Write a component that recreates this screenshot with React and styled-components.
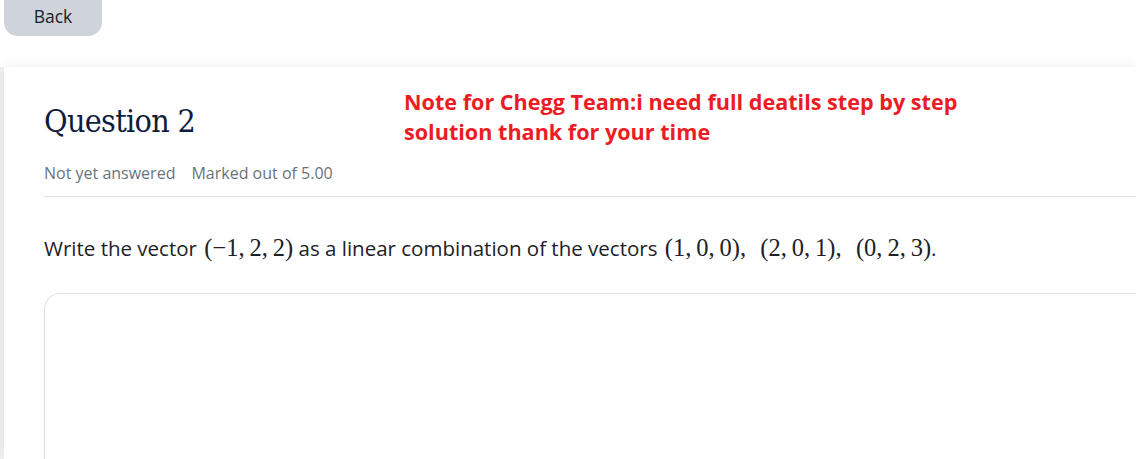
import React from "react";
import styled, { createGlobalStyle } from "styled-components";

const GlobalStyle = createGlobalStyle`
  html, body {
    margin: 0;
    padding: 0;
    background: #ffffff;
    overflow: hidden;
  }
  body {
    font-family: "Open Sans", "Noto Sans", sans-serif;
    color: #1d2125;
  }
`;

const Page = styled.div`
  display: flex;
  flex-direction: column;
  width: 1136px;
  height: 459px;
  overflow: hidden;
`;

const BackButton = styled.button`
  align-self: flex-start;
  margin: -12px 0 0 4px;
  width: 98px;
  height: 48px;
  padding: 8px 0 0;
  border: none;
  border-radius: 14px;
  background: #ced4da;
  color: #1d2125;
  font-family: "Open Sans", sans-serif;
  font-size: 17.5px;
`;

const Card = styled.section`
  display: flex;
  flex-direction: column;
  margin: 31px 0 0 4px;
  padding: 20px 0 0 40px;
  background: #fff;
  box-shadow: 0 -2px 12px rgba(0, 0, 0, 0.06), -4px 0 0 #f0f0f0;
  flex: 1;
`;

const HeaderRow = styled.div`
  display: flex;
  align-items: flex-start;
`;

const Title = styled.h3`
  width: 360px;
  margin: 16px 0 0;
  font-family: "DejaVu Serif", "Liberation Serif", serif;
  font-stretch: semi-condensed;
  font-weight: 400;
  font-size: 32px;
  line-height: 36px;
  letter-spacing: -0.7px;
  color: #0f1c3f;
`;

const Note = styled.p`
  margin: 0;
  width: 600px;
  font-family: "Open Sans", sans-serif;
  font-weight: 700;
  font-size: 21.6px;
  line-height: 30px;
  color: #ec1c24;
`;

const Meta = styled.div`
  display: flex;
  gap: 16px;
  margin-top: 15px;
  font-size: 16px;
  line-height: 22px;
  color: #6a737b;
`;

const Divider = styled.hr`
  margin: 12px 0 0;
  border: none;
  border-top: 1px solid #dee2e6;
`;

const QuestionText = styled.p`
  margin: 37px 0 0;
  font-size: 20.5px;
  line-height: 28px;
`;

const Math = styled.span`
  font-family: "Liberation Serif", "DejaVu Serif", serif;
  font-size: 24.5px;
  margin-left: 2px;
`;

const AnswerBox = styled.div`
  margin-top: 31px;
  margin-right: -20px;
  flex: 1;
  border: 1px solid #dee2e6;
  border-bottom: none;
  border-radius: 16px 0 0 0;
`;

export default function App() {
  return (
    <>
      <GlobalStyle />
      <Page>
        <BackButton>Back</BackButton>
        <Card>
          <HeaderRow>
            <Title>Question 2</Title>
            <Note>
              Note for Chegg Team:i need full deatils step by step solution
              thank for your time
            </Note>
          </HeaderRow>
          <Meta>
            <span>Not yet answered</span>
            <span>Marked out of 5.00</span>
          </Meta>
          <Divider />
          <QuestionText>
            Write the vector <Math>(−1,{"\u2009"}2,{"\u2009"}2)</Math> as a
            linear combination of the vectors{" "}
            <Math>
              (1,{"\u2009"}0,{"\u2009"}0),{"\u2002\u200A"}(2,{"\u2009"}0,
              {"\u2009"}1),{"\u2002\u200A"}(0,{"\u2009"}2,{"\u2009"}3)
            </Math>
            .
          </QuestionText>
          <AnswerBox />
        </Card>
      </Page>
    </>
  );
}
